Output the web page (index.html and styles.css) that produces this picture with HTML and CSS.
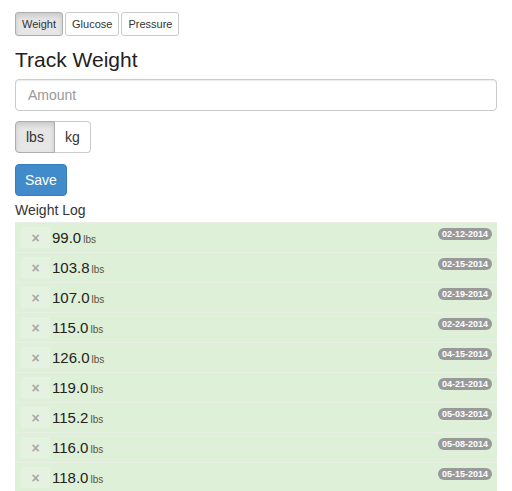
FILE: index.html
```html
<!DOCTYPE html>
<html>
<head>
<meta charset="utf-8">
<link rel="stylesheet" href="styles.css">
</head>
<body>
<div class="page">
  <div class="tabs">
    <button class="tab active">Weight</button>
    <button class="tab">Glucose</button>
    <button class="tab">Pressure</button>
  </div>
  <h3 class="title">Track Weight</h3>
  <input class="amount" type="text" placeholder="Amount">
  <div class="units">
    <button class="unit active">lbs</button>
    <button class="unit">kg</button>
  </div>
  <button class="save">Save</button>
  <div class="label">Weight Log</div>
  <ul class="log">
    <li class="row"><span class="remove">×</span><span class="val">99.0</span><small class="u">lbs</small><span class="badge">02-12-2014</span></li>
    <li class="row"><span class="remove">×</span><span class="val">103.8</span><small class="u">lbs</small><span class="badge">02-15-2014</span></li>
    <li class="row"><span class="remove">×</span><span class="val">107.0</span><small class="u">lbs</small><span class="badge">02-19-2014</span></li>
    <li class="row"><span class="remove">×</span><span class="val">115.0</span><small class="u">lbs</small><span class="badge">02-24-2014</span></li>
    <li class="row"><span class="remove">×</span><span class="val">126.0</span><small class="u">lbs</small><span class="badge">04-15-2014</span></li>
    <li class="row"><span class="remove">×</span><span class="val">119.0</span><small class="u">lbs</small><span class="badge">04-21-2014</span></li>
    <li class="row"><span class="remove">×</span><span class="val">115.2</span><small class="u">lbs</small><span class="badge">05-03-2014</span></li>
    <li class="row"><span class="remove">×</span><span class="val">116.0</span><small class="u">lbs</small><span class="badge">05-08-2014</span></li>
    <li class="row"><span class="remove">×</span><span class="val">118.0</span><small class="u">lbs</small><span class="badge">05-15-2014</span></li>
  </ul>
</div>
</body>
</html>
```
FILE: styles.css
```css
* { box-sizing: border-box; }
html, body { margin: 0; padding: 0; background: #fff; }
body {
  font-family: "Liberation Sans", Arial, sans-serif;
  font-size: 14px;
  color: #333;
  overflow: hidden;
}
.page { padding: 12px 15px 0 15px; }
.tabs { display: flex; gap: 2px; }
.tab {
  font-family: inherit;
  font-size: 11px;
  line-height: 16px;
  padding: 3px 6px;
  border: 1px solid #ccc;
  border-radius: 3px;
  background: #fff;
  color: #333;
  margin: 0;
}
.tab.active {
  background: #e6e6e6;
  border-color: #adadad;
  box-shadow: inset 0 3px 5px rgba(0,0,0,0.125);
}
.title {
  font-size: 21px;
  font-weight: 500;
  line-height: 23px;
  margin: 12px 0 8px 0;
  color: #222;
}
.amount {
  display: block;
  width: 100%;
  height: 32px;
  padding: 6px 12px;
  font-family: inherit;
  font-size: 14px;
  color: #555;
  border: 1px solid #ccc;
  border-radius: 4px;
  box-shadow: inset 0 1px 1px rgba(0,0,0,0.075);
  margin: 0;
}
.amount::placeholder { color: #999; }
.units { display: flex; margin-top: 10px; }
.unit {
  font-family: inherit;
  font-size: 14px;
  line-height: 18px;
  padding: 6px 10px;
  border: 1px solid #ccc;
  background: #fff;
  color: #333;
  margin: 0;
}
.unit:first-child { border-radius: 4px 0 0 4px; }
.unit:last-child { border-radius: 0 4px 4px 0; border-left: none; }
.unit.active {
  background: #e6e6e6;
  border-color: #adadad;
  box-shadow: inset 0 3px 5px rgba(0,0,0,0.125);
}
.save {
  display: block;
  margin-top: 11px;
  font-family: inherit;
  font-size: 14px;
  line-height: 18px;
  padding: 6px 9px;
  background: #428bca;
  border: 1px solid #357ebd;
  border-radius: 4px;
  color: #fff;
}
.label {
  line-height: 20px;
  margin-top: 4px;
  margin-bottom: 2px;
}
.log { list-style: none; margin: 0; padding: 0; }
.row {
  display: flex;
  align-items: center;
  height: 30px;
  background: #dff0d8;
  border-top: 1px solid #e9efe5;
  padding: 0 5px 0 6px;
}
.remove {
  width: 29px;
  height: 21px;
  display: flex;
  align-items: center;
  justify-content: center;
  background: #e6f2e1;
  color: #a8a8a8;
  font-size: 14px;
  font-weight: bold;
  margin-right: 2px;
}
.val { font-size: 15px; color: #222; }
.u { font-size: 10px; color: #5a5240; margin-left: 2px; margin-top: 3px; }
.badge {
  margin-left: auto;
  align-self: flex-start;
  margin-top: 5px;
  background: #999;
  color: #fff;
  font-weight: bold;
  font-size: 9px;
  line-height: 12px;
  padding: 0 4px;
  border-radius: 6px;
}
```
